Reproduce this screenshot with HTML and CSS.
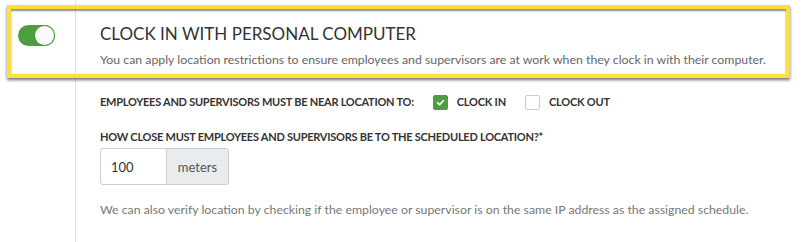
FILE: index.html
```html
<!DOCTYPE html>
<html lang="en">
<head>
    <meta charset="UTF-8">
    <title>Clock in settings</title>
    <link rel="stylesheet" href="styles.css">
</head>
<body>
    <div class="setting">
        <div class="row head">
            <div class="aside">
                <span class="switch on"><span class="knob"></span></span>
            </div>
            <div class="main">
                <h2>CLOCK IN WITH PERSONAL COMPUTER</h2>
                <p>You can apply location restrictions to ensure employees and supervisors are at work when they clock in with their computer.</p>
            </div>
            <div class="spotlight"></div>
        </div>

        <div class="row">
            <div class="aside"></div>
            <div class="main">
                <div class="near">
                    <span class="label">EMPLOYEES AND SUPERVISORS MUST BE NEAR LOCATION TO:</span>
                    <label class="check">
                        <span class="box checked">
                            <svg viewBox="0 0 10 10" width="9" height="9"><path d="M1.6 5.2 L4 7.4 L8.4 2.8" fill="none" stroke="#fff" stroke-width="1.8" stroke-linecap="round" stroke-linejoin="round"/></svg>
                        </span>
                        CLOCK IN
                    </label>
                    <label class="check">
                        <span class="box"></span>
                        CLOCK OUT
                    </label>
                </div>

                <div class="label distance-label">HOW CLOSE MUST EMPLOYEES AND SUPERVISORS BE TO THE SCHEDULED LOCATION?*</div>
                <div class="input-group">
                    <span class="value">100</span>
                    <span class="addon">meters</span>
                </div>

                <p class="note">We can also verify location by checking if the employee or supervisor is on the same IP address as the assigned schedule.</p>
            </div>
        </div>
    </div>
</body>
</html>
```

FILE: styles.css
```css
body {
    margin: 0;
    background-color: #fff;
    font-family: Lato, "Noto Sans", sans-serif;
    color: #333;
}
.setting {
    display: flex;
    flex-direction: column;
    min-height: 242px;
}
.row {
    display: flex;
}
.row:last-child {
    flex: 1;
}
.aside {
    width: 75px;
    flex-shrink: 0;
    box-sizing: border-box;
}
.main {
    flex: 1;
    border-left: 1px solid #e0e0e0;
    padding-left: 24px;
}
.head {
    position: relative;
}
.head .aside {
    padding: 25px 0 0 18px;
}
.head .main {
    padding-top: 24px;
    padding-bottom: 12px;
}
.head h2 {
    margin: 0;
    font-size: 17px;
    line-height: 20px;
    font-weight: 400;
    color: #333;
}
.head p {
    margin: 7px 0 0;
    font-size: 12.3px;
    line-height: 18px;
    color: #666;
}
.spotlight {
    position: absolute;
    top: 5px;
    left: 7px;
    width: 783px;
    height: 73px;
    box-sizing: border-box;
    border: 4px solid #fbe03c;
    box-shadow: 0 2px 3px rgba(0, 0, 0, 0.55), inset 0 2px 2px rgba(0, 0, 0, 0.45);
    pointer-events: none;
}
.switch {
    display: block;
    position: relative;
    width: 37px;
    height: 21px;
    border-radius: 11px;
    background-color: #4c9e3f;
}
.knob {
    position: absolute;
    top: 1px;
    right: 1px;
    width: 19px;
    height: 19px;
    box-sizing: border-box;
    border-radius: 50%;
    background-color: #fafafa;
    box-shadow: 0 0 0 1px #4c9e3f;
}
.row .main {
    padding-bottom: 10px;
}
.label {
    font-size: 11px;
    line-height: 16px;
    font-weight: 700;
    letter-spacing: -0.25px;
    color: #333;
}
.near {
    display: flex;
    align-items: center;
    margin-top: 15px;
}
.check {
    display: flex;
    align-items: center;
    font-size: 11px;
    line-height: 16px;
    font-weight: 700;
    letter-spacing: -0.2px;
    color: #333;
}
.near .label {
    margin-right: 19px;
}
.check + .check {
    margin-left: 19px;
}
.box {
    width: 15px;
    height: 15px;
    box-sizing: border-box;
    border: 1px solid #ccc;
    border-radius: 2px;
    margin-right: 9px;
    display: flex;
    align-items: center;
    justify-content: center;
    background-color: #fff;
}
.box.checked {
    background-color: #4c9e3f;
    border-color: #4c9e3f;
}
.distance-label {
    margin-top: 19px;
}
.input-group {
    display: flex;
    width: 129px;
    height: 37px;
    margin-top: 3px;
    box-sizing: border-box;
    border: 1px solid #ccc;
    border-radius: 3px;
    font-size: 13px;
    color: #333;
}
.value {
    width: 65px;
    padding-left: 10px;
    box-sizing: border-box;
    display: flex;
    align-items: center;
}
.addon {
    flex: 1;
    display: flex;
    align-items: center;
    justify-content: center;
    background-color: #e9ecef;
    border-left: 1px solid #ccc;
    color: #555;
    border-radius: 0 2px 2px 0;
}
.note {
    margin: 16px 0 0;
    font-size: 12.3px;
    line-height: 18px;
    color: #777;
}
```
